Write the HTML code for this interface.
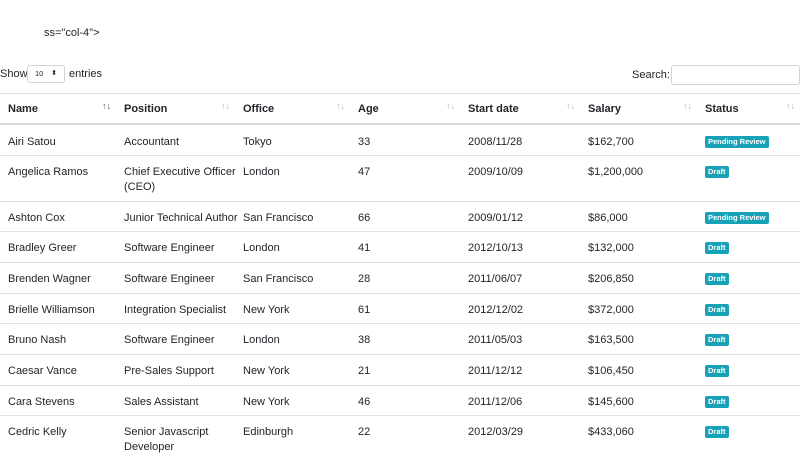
<!DOCTYPE html>
<html><head><meta charset="utf-8"><style>
body{margin:0;width:800px;height:450px;overflow:hidden;background:#fff;font-family:"Liberation Sans",sans-serif;font-size:11px;color:#212529;position:relative}
.a{position:absolute;white-space:nowrap}
.h{font-weight:bold;font-size:11px}
.line{position:absolute;left:0;width:800px;height:1px;background:#dee2e6}
.b{position:absolute;background:#17a2b8;color:#fff;font-weight:bold;font-size:7.5px;padding:2px 3px;border-radius:2px;line-height:8px}
.s{position:absolute;color:#bbb;font-size:9px}
</style></head><body>
<div class="a" style="left:44px;top:27px">ss="col-4"&gt;</div>
<div class="a" style="left:0;top:68px">Show</div>
<div style="position:absolute;left:27px;top:65px;width:38px;height:18px;border:1px solid #ced4da;border-radius:3px;box-sizing:border-box;font-size:7.5px;line-height:16px;padding-left:7px">10 <span style="position:absolute;right:7px;font-size:7px">&#x2B0D;</span></div>
<div class="a" style="left:69px;top:68px">entries</div>
<div class="a" style="left:632px;top:69px">Search:</div>
<div style="position:absolute;left:671px;top:65px;width:129px;height:20px;border:1px solid #ced4da;border-radius:3px;box-sizing:border-box;background:#fff"></div>
<div class="line" style="top:93px"></div>
<div class="line" style="top:123px;height:2px;background:#d8dbde"></div>
<div class="a h" style="left:8px;top:103px">Name</div>
<div class="a h" style="left:124px;top:103px">Position</div>
<div class="a h" style="left:243px;top:103px">Office</div>
<div class="a h" style="left:358px;top:103px">Age</div>
<div class="a h" style="left:468px;top:103px">Start date</div>
<div class="a h" style="left:588px;top:103px">Salary</div>
<div class="a h" style="left:705px;top:103px">Status</div>
<div class="s" style="left:102px;top:101px;color:#555">↑↓</div>
<div class="s" style="left:221px;top:101px">↑↓</div>
<div class="s" style="left:336px;top:101px">↑↓</div>
<div class="s" style="left:446px;top:101px">↑↓</div>
<div class="s" style="left:566px;top:101px">↑↓</div>
<div class="s" style="left:683px;top:101px">↑↓</div>
<div class="s" style="left:786px;top:101px">↑↓</div>
<div id="rows"></div>
<script>
var d=[["Airi Satou","Accountant","Tokyo","33","2008/11/28","$162,700","Pending Review"],
["Angelica Ramos","Chief Executive Officer|(CEO)","London","47","2009/10/09","$1,200,000","Draft"],
["Ashton Cox","Junior Technical Author","San Francisco","66","2009/01/12","$86,000","Pending Review"],
["Bradley Greer","Software Engineer","London","41","2012/10/13","$132,000","Draft"],
["Brenden Wagner","Software Engineer","San Francisco","28","2011/06/07","$206,850","Draft"],
["Brielle Williamson","Integration Specialist","New York","61","2012/12/02","$372,000","Draft"],
["Bruno Nash","Software Engineer","London","38","2011/05/03","$163,500","Draft"],
["Caesar Vance","Pre-Sales Support","New York","21","2011/12/12","$106,450","Draft"],
["Cara Stevens","Sales Assistant","New York","46","2011/12/06","$145,600","Draft"],
["Cedric Kelly","Senior Javascript|Developer","Edinburgh","22","2012/03/29","$433,060","Draft"]];
var tops=[135,165,211,241,272,303,333,364,395,425],xs=[8,124,243,358,468,588,705],h="";
d.forEach(function(r,i){var t=tops[i];
if(i>0)h+='<div class="line" style="top:'+(t-10)+'px"></div>';
for(var c=0;c<6;c++){var p=r[c].split("|");h+='<div class="a" style="left:'+xs[c]+'px;top:'+(t+1)+'px">'+p[0]+'</div>';if(p[1])h+='<div class="a" style="left:'+xs[c]+'px;top:'+(t+16)+'px">'+p[1]+'</div>';}
h+='<div class="b" style="left:705px;top:'+(t+1)+'px">'+r[6]+'</div>';});
document.getElementById("rows").innerHTML=h;
</script>
</body></html>
